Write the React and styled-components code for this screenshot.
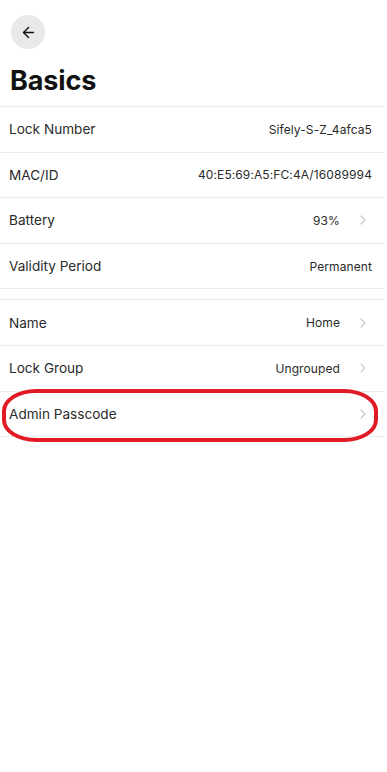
import React from 'react';
import styled, { createGlobalStyle } from 'styled-components';
import { ArrowLeft } from 'lucide-react';

const GlobalStyle = createGlobalStyle`
  html, body {
    margin: 0;
    padding: 0;
    background: #ffffff;
  }
  body {
    font-family: Inter, "Noto Sans", "Liberation Sans", sans-serif;
    color: #222;
    -webkit-font-smoothing: antialiased;
  }
`;

const Page = styled.div`
  width: 387px;
  min-height: 772px;
  background: #fff;
`;

const Header = styled.div`
  padding: 15px 0 0 11px;
`;

const BackButton = styled.button`
  width: 34px;
  height: 34px;
  border-radius: 50%;
  border: none;
  background: #e9e9e9;
  display: flex;
  align-items: center;
  justify-content: center;
  padding: 0;
  color: #111;
`;

const Title = styled.h1`
  margin: 15px 0 0 10px;
  padding-bottom: 8px;
  font-size: 27px;
  line-height: 34px;
  font-weight: 700;
  color: #111;
  letter-spacing: -0.1px;
`;

const Section = styled.div`
  border-top: 1px solid #ececec;
  margin-top: ${(p) => p.$gap || 0}px;
  margin-right: 3px;
`;

const Row = styled.div`
  position: relative;
  box-sizing: border-box;
  height: 45.6px;
  display: flex;
  align-items: center;
  padding: 0 12px 0 9px;
  border-bottom: 1px solid #ececec;
`;

const Label = styled.span`
  flex: 1;
  font-size: 13.6px;
  color: #2a2a2a;
`;

const Value = styled.span`
  font-size: 12px;
  color: #2a2a2a;
  letter-spacing: 0.1px;
`;

const Chevron = styled.span`
  box-sizing: border-box;
  width: 14px;
  margin-left: 18px;
  display: flex;
  align-items: center;
  padding-left: 2px;
`;

const Highlight = styled.div`
  position: absolute;
  left: 2px;
  top: -3px;
  width: 376px;
  height: 53px;
  box-sizing: border-box;
  border: 4px solid #e11b26;
  border-radius: 34px / 22px;
  pointer-events: none;
`;

const ChevronIcon = () => (
  <svg width="6" height="10" viewBox="0 0 6 10">
    <path d="M1 1 L5 5 L1 9" fill="none" stroke="#c9c9c9" strokeWidth="1.2" strokeLinecap="round" strokeLinejoin="round" />
  </svg>
);

const info = [
  { label: 'Lock Number', value: 'Sifely-S-Z_4afca5' },
  { label: 'MAC/ID', value: '40:E5:69:A5:FC:4A/16089994' },
  { label: 'Battery', value: '93%', arrow: true },
  { label: 'Validity Period', value: 'Permanent' },
];

const settings = [
  { label: 'Name', value: 'Home', arrow: true },
  { label: 'Lock Group', value: 'Ungrouped', arrow: true },
  { label: 'Admin Passcode', value: '', arrow: true, marked: true },
];

function ListRow({ item }) {
  return (
    <Row>
      <Label>{item.label}</Label>
      {item.value && <Value>{item.value}</Value>}
      {item.arrow && (
        <Chevron>
          <ChevronIcon />
        </Chevron>
      )}
      {item.marked && <Highlight />}
    </Row>
  );
}

export default function App() {
  return (
    <Page>
      <GlobalStyle />
      <Header>
        <BackButton aria-label="Back">
          <ArrowLeft size={17} strokeWidth={2} />
        </BackButton>
      </Header>
      <Title>Basics</Title>
      <Section>
        {info.map((item) => (
          <ListRow key={item.label} item={item} />
        ))}
      </Section>
      <Section $gap={10}>
        {settings.map((item) => (
          <ListRow key={item.label} item={item} />
        ))}
      </Section>
    </Page>
  );
}
